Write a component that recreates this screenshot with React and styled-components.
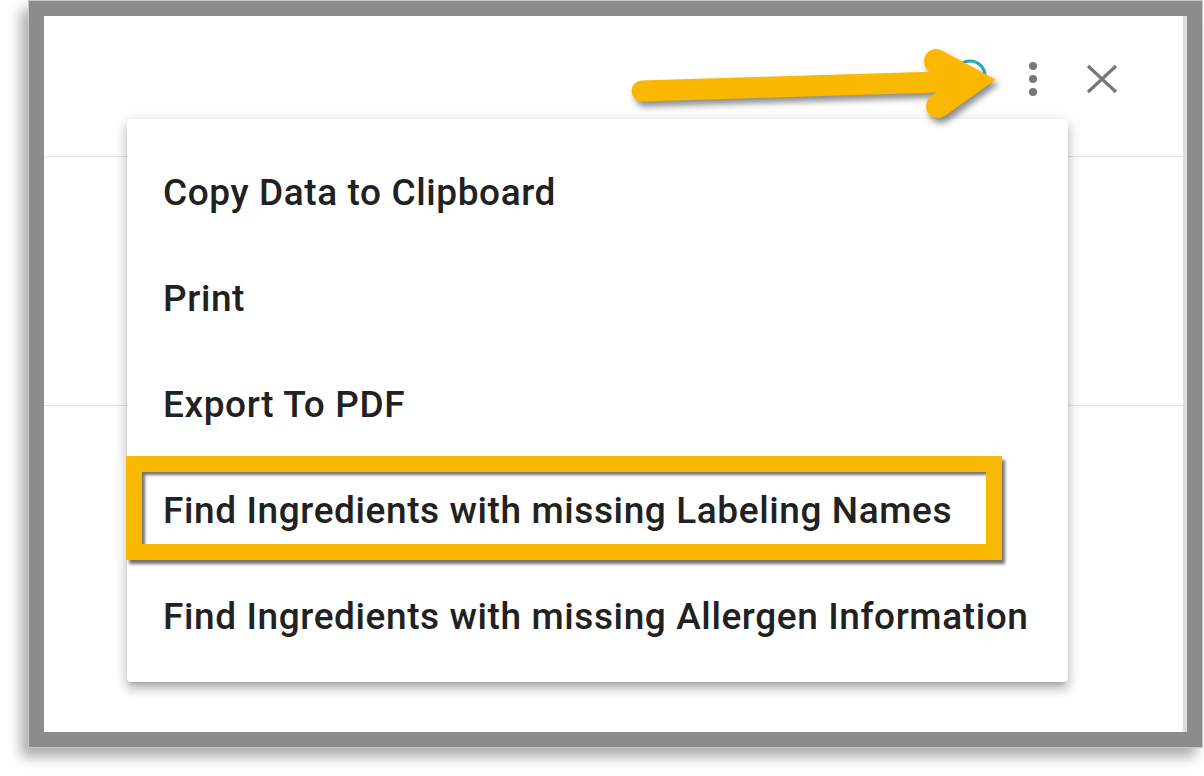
import React from "react";
import styled, { createGlobalStyle } from "styled-components";

const Global = createGlobalStyle`
  html, body { margin: 0; padding: 0; background: #ffffff; overflow: hidden; }
  body { font-family: Roboto, "Liberation Sans", sans-serif; }
  * { box-sizing: border-box; }
`;

const Stage = styled.div`
  position: relative;
  width: 1204px;
  height: 776px;
  padding-left: 28px;
  overflow: hidden;
`;

const Frame = styled.div`
  width: 1175px;
  height: 748px;
  padding: 16px;
  background: #8c8c8c;
  box-shadow: -7px 9px 12px rgba(0, 0, 0, 0.32);
  outline: 1px solid #c9c9c9;
  outline-offset: -1px;
`;

const Panel = styled.div`
  position: relative;
  height: 100%;
  background: #ffffff;
  display: flex;
  flex-direction: column;
  box-shadow: inset -4px 0 0 #dcdcdc;
`;

const Header = styled.div`
  height: 141px;
  flex: none;
  display: flex;
  justify-content: flex-end;
  align-items: flex-start;
  padding: 39px 61px 0 0;
  border-bottom: 1px solid #e0e0e0;
`;

const IconButton = styled.div`
  width: 48px;
  height: 48px;
  display: flex;
  align-items: center;
  justify-content: center;
  margin-left: ${(p) => p.$gap || 0}px;
  margin-top: ${(p) => p.$lift || 0}px;
`;

const Section = styled.div`
  height: 249px;
  flex: none;
  border-bottom: 1px solid #e0e0e0;
`;

const Menu = styled.div`
  position: absolute;
  left: 83px;
  top: 103px;
  width: 941px;
  padding: 20px 0 13px;
  background: #ffffff;
  border-radius: 4px;
  box-shadow: 0 5px 5px -3px rgba(0, 0, 0, 0.2),
    0 8px 10px 1px rgba(0, 0, 0, 0.14), 0 3px 14px 2px rgba(0, 0, 0, 0.12);
`;

const Item = styled.div`
  position: relative;
  height: 106px;
  display: flex;
  align-items: center;
  padding-left: 36px;
  font-family: Roboto, "Liberation Sans", sans-serif;
  font-weight: 500;
  font-size: 37px;
  letter-spacing: 0.6px;
  color: #212121;
  white-space: nowrap;
`;

const Highlight = styled.div`
  position: absolute;
  left: -1px;
  top: -1px;
  width: 876px;
  height: 104px;
  border: 16px solid #fab800;
  box-shadow: 3px 4px 3px rgba(0, 0, 0, 0.55),
    inset 3px 3px 3px rgba(0, 0, 0, 0.55);
  pointer-events: none;
`;

const ArrowLayer = styled.svg`
  position: absolute;
  left: 0;
  top: 0;
  width: 1204px;
  height: 776px;
  pointer-events: none;
  filter: drop-shadow(3px 5px 3px rgba(0, 0, 0, 0.45));
`;

const items = [
  "Copy Data to Clipboard",
  "Print",
  "Export To PDF",
  "Find Ingredients with missing Labeling Names",
  "Find Ingredients with missing Allergen Information",
];

export default function App() {
  return (
    <>
      <Global />
      <Stage>
        <Frame>
          <Panel>
            <Header>
              <IconButton $lift={-3}>
                <svg width="36" height="36" viewBox="0 0 36 36">
                  <circle cx="18" cy="18" r="15" fill="none" stroke="#27a7b6" strokeWidth="3" />
                </svg>
              </IconButton>
              <IconButton $gap={15}>
                <svg width="12" height="36" viewBox="0 0 12 36">
                  <circle cx="6" cy="5" r="4" fill="#777777" />
                  <circle cx="6" cy="18" r="4" fill="#777777" />
                  <circle cx="6" cy="31" r="4" fill="#777777" />
                </svg>
              </IconButton>
              <IconButton $gap={21}>
                <svg width="32" height="32" viewBox="0 0 32 32">
                  <path d="M2 3 L30 29 M30 3 L2 29" stroke="#777777" strokeWidth="3.2" fill="none" />
                </svg>
              </IconButton>
            </Header>
            <Section />
            <Menu>
              {items.map((t, i) => (
                <Item key={t}>
                  {t}
                  {i === 3 && <Highlight />}
                </Item>
              ))}
            </Menu>
          </Panel>
        </Frame>
        <ArrowLayer viewBox="0 0 1204 776">
          <path
            d="M642 91 L972 81"
            stroke="#fab800"
            strokeWidth="21"
            strokeLinecap="round"
            fill="none"
          />
          <path
            d="M936 61 L973 81 L938 106"
            stroke="#fab800"
            strokeWidth="24"
            strokeLinecap="round"
            strokeLinejoin="miter"
            strokeMiterlimit="6"
            fill="none"
          />
        </ArrowLayer>
      </Stage>
    </>
  );
}
